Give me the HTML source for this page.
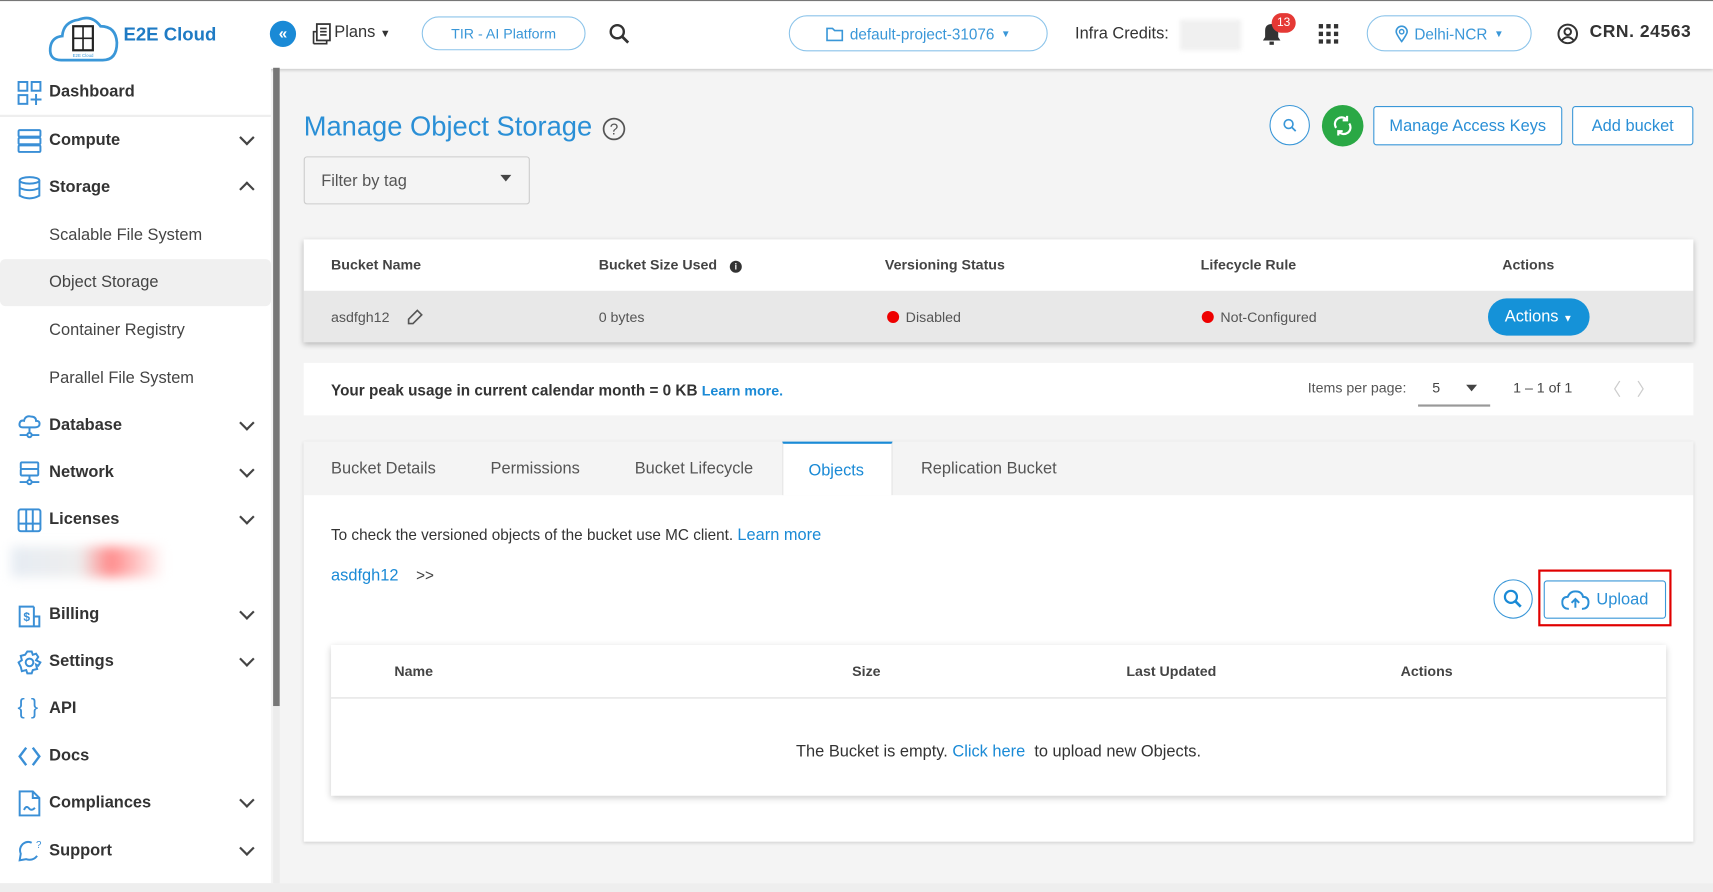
<!DOCTYPE html>
<html><head><meta charset="utf-8"><style>
html,body{margin:0;padding:0;width:1713px;height:892px;overflow:hidden;background:#f4f4f4;}
#w{position:absolute;left:0;top:0;width:1568px;height:816px;transform:scale(1.0925,1.0931);transform-origin:0 0;background:#f4f4f4;font-family:"Liberation Sans",sans-serif;color:#333;}
.a{position:absolute;white-space:nowrap;}
.pill{position:absolute;border:1.5px solid #8cc4ea;border-radius:18px;box-sizing:border-box;color:#3a97d8;font-size:14px;display:flex;align-items:center;justify-content:center;gap:6px;background:#fff}
.side .it{position:absolute;left:45px;font-size:15px;font-weight:bold;color:#333;transform:translateY(-50%)}
.side .sub{position:absolute;left:45px;font-size:15px;color:#444;transform:translateY(-50%)}
.chev{position:absolute;left:221px;width:8px;height:8px;border-right:2px solid #444;border-bottom:2px solid #444;transform:rotate(45deg)}
.ic{position:absolute;left:16px;}
.th{position:absolute;font-size:13px;font-weight:bold;color:#444;transform:translateY(-50%)}
.td{position:absolute;font-size:13px;color:#555;transform:translateY(-50%)}
.dot{display:inline-block;width:11px;height:11px;border-radius:50%;background:#e00;vertical-align:-1px;margin-right:6px}
.btn{position:absolute;border:1.5px solid #3a97d8;border-radius:3px;background:#fff;color:#2a8fd6;font-size:15px;display:flex;align-items:center;justify-content:center;box-sizing:border-box}
</style></head><body><div id="w">
<!-- top bar -->
<div class="a" style="left:0;top:0;width:1568px;height:62px;background:#fff;border-top:1px solid #777;box-shadow:0 1px 3px rgba(0,0,0,.2)"></div>
<svg class="a" style="left:44px;top:11px" width="66" height="46" viewBox="0 0 66 46"><path d="M12 44 Q1 44 2 33 Q3 23 13 22 Q14 9 28 7 Q40 2 48 13 Q62 13 63 28 Q63 44 50 44 Z" fill="#fff" stroke="#3a97d8" stroke-width="2.5"/><rect x="23" y="13" width="18" height="22" fill="none" stroke="#222" stroke-width="2"/><path d="M32 13V35M23 24H41" stroke="#222" stroke-width="1.5"/><text x="32" y="41" font-size="4" text-anchor="middle" fill="#3a97d8">E2E Cloud</text></svg>
<div class="a" style="left:113px;top:22px;font-size:17px;font-weight:bold;color:#1f7bc4">E2E Cloud</div>
<div class="a" style="left:247px;top:19px;width:24px;height:24px;border-radius:50%;background:#1a8ad6;color:#fff;font-size:14px;text-align:center;line-height:23px;font-weight:bold">«</div>
<svg class="a" style="left:286px;top:21px" width="18" height="20" viewBox="0 0 18 20"><rect x="4" y="1" width="12" height="15" fill="none" stroke="#333" stroke-width="1.6"/><path d="M1 19H13V16M1 19V8H4M7 5H13M7 8H13M7 11H13" stroke="#333" stroke-width="1.5" fill="none"/></svg>
<div class="a" style="left:306px;top:21px;font-size:15px;color:#333">Plans <span style="font-size:10px">▼</span></div>
<div class="pill" style="left:386px;top:15px;width:150px;height:31px;font-size:13px">TIR - AI Platform</div>
<svg class="a" style="left:557px;top:21px" width="20" height="20" viewBox="0 0 20 20"><circle cx="8" cy="8" r="6" fill="none" stroke="#333" stroke-width="2.2"/><path d="M12.5 12.5L18 18" stroke="#333" stroke-width="2.5"/></svg>
<div class="pill" style="left:722px;top:14px;width:237px;height:33px;">
<svg width="16" height="14" viewBox="0 0 16 14"><path d="M1 2H6L8 4H15V13H1Z" fill="none" stroke="#3a97d8" stroke-width="1.5"/></svg>default-project-31076 <span style="font-size:9px">▼</span></div>
<div class="a" style="left:984px;top:22px;font-size:15px;color:#333">Infra Credits:</div>
<div class="a" style="left:1080px;top:18px;width:56px;height:28px;background:#f0f0f0;filter:blur(2px)"></div>
<svg class="a" style="left:1153px;top:19px" width="22" height="24" viewBox="0 0 22 24"><path d="M3 18H19L17 15V9Q17 3 11 3Q5 3 5 9V15Z" fill="#333"/><rect x="9" y="19" width="4" height="3" fill="#333"/></svg>
<div class="a" style="left:1164px;top:12px;width:22px;height:18px;border-radius:9px;background:#e53935;color:#fff;font-size:11px;text-align:center;line-height:18px">13</div>
<svg class="a" style="left:1207px;top:22px" width="18" height="18" viewBox="0 0 18 18" fill="#333"><rect x="0" y="0" width="4" height="4"/><rect x="7" y="0" width="4" height="4"/><rect x="14" y="0" width="4" height="4"/><rect x="0" y="7" width="4" height="4"/><rect x="7" y="7" width="4" height="4"/><rect x="14" y="7" width="4" height="4"/><rect x="0" y="14" width="4" height="4"/><rect x="7" y="14" width="4" height="4"/><rect x="14" y="14" width="4" height="4"/></svg>
<div class="pill" style="left:1251px;top:14px;width:151px;height:33px;">
<svg width="12" height="16" viewBox="0 0 12 16"><path d="M6 15Q1 8 1 6A5 5 0 0 1 11 6Q11 8 6 15Z" fill="none" stroke="#3a97d8" stroke-width="1.5"/><circle cx="6" cy="6" r="2" fill="none" stroke="#3a97d8" stroke-width="1.3"/></svg>Delhi-NCR <span style="font-size:9px">▼</span></div>
<svg class="a" style="left:1425px;top:21px" width="20" height="20" viewBox="0 0 20 20"><circle cx="10" cy="10" r="8.5" fill="none" stroke="#333" stroke-width="1.8"/><circle cx="10" cy="8" r="3" fill="none" stroke="#333" stroke-width="1.8"/><path d="M4.5 16Q10 10 15.5 16" fill="none" stroke="#333" stroke-width="1.8"/></svg>
<div class="a" style="left:1455px;top:21px;font-size:16px;font-weight:bold;color:#333;letter-spacing:.5px">CRN. 24563</div>

<!-- sidebar -->
<div class="side">
<div class="a" style="left:0;top:62px;width:248px;height:746px;background:#fff"></div>
<div class="a" style="left:0;top:105px;width:248px;height:2px;background:#eee"></div>
<div class="a" style="left:0;top:237px;width:248px;height:43px;background:#f0f0f0;border-radius:5px"></div>
<div class="a" style="left:250px;top:62px;width:6px;height:584px;background:#777"></div>
<div class="a" style="left:250px;top:646px;width:6px;height:162px;background:#ececec"></div>
<div class="a" style="left:0;top:808px;width:1568px;height:8px;background:#eee"></div>
<svg class="ic" style="top:74px" width="22" height="22" viewBox="0 0 22 22" fill="none" stroke="#3a8fd6" stroke-width="1.8"><rect x="1" y="1" width="8" height="8"/><rect x="13" y="1" width="8" height="8"/><rect x="1" y="13" width="8" height="8"/><path d="M17 12V22M12 17H22"/></svg>
<div class="it" style="top:84px">Dashboard</div>
<svg class="ic" style="top:118px" width="22" height="22" viewBox="0 0 22 22" fill="none" stroke="#3a8fd6" stroke-width="1.8"><rect x="1" y="1" width="20" height="6" rx="1"/><rect x="1" y="8" width="20" height="6" rx="1"/><rect x="1" y="15" width="20" height="6" rx="1"/></svg>
<div class="it" style="top:128px">Compute</div><div class="chev" style="top:121px"></div>
<svg class="ic" style="top:161px" width="22" height="22" viewBox="0 0 22 22" fill="none" stroke="#3a8fd6" stroke-width="1.8"><ellipse cx="11" cy="4" rx="9" ry="3"/><path d="M2 4V18Q11 23 20 18V4M2 11Q11 15 20 11"/></svg>
<div class="it" style="top:171px">Storage</div><div class="chev" style="top:168px;transform:rotate(225deg)"></div>
<div class="sub" style="top:215px">Scalable File System</div>
<div class="sub" style="top:258px">Object Storage</div>
<div class="sub" style="top:302px">Container Registry</div>
<div class="sub" style="top:346px">Parallel File System</div>
<svg class="ic" style="top:379px" width="22" height="22" viewBox="0 0 22 22" fill="none" stroke="#3a8fd6" stroke-width="1.8"><path d="M5 12Q1 12 2 8Q3 5 6 6Q7 1 12 2Q17 2 17 6Q21 6 20 10Q19 12 16 12Z"/><path d="M11 12V17M2 19H9M13 19H20"/><circle cx="11" cy="19" r="2"/></svg>
<div class="it" style="top:389px">Database</div><div class="chev" style="top:382px"></div>
<svg class="ic" style="top:422px" width="22" height="22" viewBox="0 0 22 22" fill="none" stroke="#3a8fd6" stroke-width="1.8"><rect x="3" y="1" width="16" height="6" rx="1"/><rect x="3" y="7" width="16" height="6" rx="1"/><path d="M11 13V17M2 19H9M13 19H20"/><circle cx="11" cy="19" r="2"/></svg>
<div class="it" style="top:432px">Network</div><div class="chev" style="top:425px"></div>
<svg class="ic" style="top:465px" width="22" height="22" viewBox="0 0 22 22" fill="none" stroke="#3a8fd6" stroke-width="1.8"><rect x="1" y="1" width="20" height="20" rx="2"/><path d="M8 1V21M14 1V21M1 14H21"/></svg>
<div class="it" style="top:475px">Licenses</div><div class="chev" style="top:468px"></div>
<div class="a" style="left:10px;top:500px;width:140px;height:28px;background:linear-gradient(90deg,#e6ecf3,#eee 45%,#ff8a8a 65%,#fff);filter:blur(5px)"></div>
<svg class="ic" style="top:552px" width="22" height="22" viewBox="0 0 22 22" fill="none" stroke="#3a8fd6" stroke-width="1.8"><path d="M15 3H2V21H15V3M15 12H20V21H15"/><text x="8.5" y="16" font-size="11" font-weight="bold" fill="#3a8fd6" stroke="none" text-anchor="middle">$</text></svg>
<div class="it" style="top:562px">Billing</div><div class="chev" style="top:555px"></div>
<svg class="ic" style="top:595px" width="22" height="22" viewBox="0 0 22 22" fill="none" stroke="#3a8fd6" stroke-width="1.8"><path d="M9 1H13L14 4L17 3L19 6L17 9L21 11L19 14L17 13L18 17L14 18L13 21H9L8 18L4 19L3 15L1 11L4 9L3 5L7 4Z"/><circle cx="11" cy="11" r="3.5"/></svg>
<div class="it" style="top:605px">Settings</div><div class="chev" style="top:598px"></div>
<div class="a" style="left:16px;top:636px;font-size:20px;color:#3a8fd6">{ }</div>
<div class="it" style="top:648px">API</div>
<svg class="ic" style="top:681px" width="22" height="22" viewBox="0 0 22 22" fill="none" stroke="#3a8fd6" stroke-width="2.2"><path d="M8 3L2 11L8 19M14 3L20 11L14 19"/></svg>
<div class="it" style="top:691px">Docs</div>
<svg class="ic" style="top:723px" width="22" height="24" viewBox="0 0 22 24" fill="none" stroke="#3a8fd6" stroke-width="1.8"><path d="M2 1H14L20 7V23H2Z M14 1V7H20"/><path d="M6 18Q8 13 11 17Q13 19 16 16"/></svg>
<div class="it" style="top:734px">Compliances</div><div class="chev" style="top:727px"></div>
<svg class="ic" style="top:767px" width="22" height="22" viewBox="0 0 22 22" fill="none" stroke="#3a8fd6" stroke-width="1.8"><path d="M13 4Q9 2 5 5Q1 9 3 14L2 20L8 19Q14 21 18 16"/><text x="17" y="9" font-size="9" fill="#3a8fd6" stroke="none">?</text></svg>
<div class="it" style="top:778px">Support</div><div class="chev" style="top:771px"></div>
</div>

<!-- header area -->
<div class="a" style="left:278px;top:102px;font-size:25px;color:#2a8fd6">Manage Object Storage</div>
<svg class="a" style="left:551px;top:107px" width="22" height="22" viewBox="0 0 22 22"><circle cx="11" cy="11" r="9.5" fill="none" stroke="#555" stroke-width="1.6"/><text x="11" y="16" font-size="14" text-anchor="middle" fill="#555">?</text></svg>
<div class="a" style="left:278px;top:143px;width:207px;height:44px;border:1px solid #ccc;box-sizing:border-box;border-radius:3px"></div>
<div class="a" style="left:294px;top:157px;font-size:15px;color:#555">Filter by tag</div>
<div class="a" style="left:458px;top:160px;width:0;height:0;border-left:5px solid transparent;border-right:5px solid transparent;border-top:6px solid #444"></div>
<div class="a" style="left:1162px;top:96px;width:37px;height:37px;border:1.5px solid #3a97d8;border-radius:50%;background:#fff;box-sizing:border-box"></div>
<svg class="a" style="left:1174px;top:108px" width="13" height="13" viewBox="0 0 13 13"><circle cx="5.5" cy="5.5" r="4" fill="none" stroke="#3a97d8" stroke-width="1.5"/><path d="M8.5 8.5L12 12" stroke="#3a97d8" stroke-width="1.6"/></svg>
<div class="a" style="left:1210px;top:96px;width:38px;height:38px;border-radius:50%;background:#2aa845"></div>
<svg class="a" style="left:1218px;top:104px" width="22" height="22" viewBox="0 0 22 22" fill="none" stroke="#fff" stroke-width="2"><path d="M5 13A6 6 0 0 1 15 6L13 4M17 9A6 6 0 0 1 7 16L9 18"/><path d="M15 2V6H11M7 20V16H11"/></svg>
<div class="btn" style="left:1257px;top:97px;width:173px;height:36px">Manage Access Keys</div>
<div class="btn" style="left:1439px;top:97px;width:111px;height:36px">Add bucket</div>

<!-- bucket table -->
<div class="a" style="left:278px;top:219px;width:1272px;height:94px;background:#fff;box-shadow:0 2px 5px rgba(0,0,0,.25)"></div>
<div class="a" style="left:278px;top:266px;width:1272px;height:47px;background:#e8e8e8"></div>
<div class="th" style="left:303px;top:242px">Bucket Name</div>
<div class="th" style="left:548px;top:242px">Bucket Size Used <span style="display:inline-block;width:11px;height:11px;border-radius:50%;background:#333;color:#fff;font-size:8px;text-align:center;line-height:11px;margin-left:8px;vertical-align:0">i</span></div>
<div class="th" style="left:810px;top:242px">Versioning Status</div>
<div class="th" style="left:1099px;top:242px">Lifecycle Rule</div>
<div class="th" style="left:1375px;top:242px">Actions</div>
<div class="td" style="left:303px;top:290px">asdfgh12</div>
<svg class="a" style="left:372px;top:282px" width="16" height="16" viewBox="0 0 16 16"><path d="M10 2L14 6L6 14H2V10Z" fill="none" stroke="#555" stroke-width="1.5"/></svg>
<div class="td" style="left:548px;top:290px">0 bytes</div>
<div class="td" style="left:812px;top:290px"><span class="dot"></span>Disabled</div>
<div class="td" style="left:1100px;top:290px"><span class="dot"></span>Not-Configured</div>
<div class="a" style="left:1362px;top:273px;width:93px;height:34px;border-radius:17px;background:#1592d8;color:#fff;font-size:15px;text-align:center;line-height:34px">Actions <span style="font-size:9px">▼</span></div>

<!-- peak usage -->
<div class="a" style="left:278px;top:332px;width:1272px;height:48px;background:#fff"></div>
<div class="a" style="left:303px;top:349px;font-size:14px;font-weight:bold;color:#333">Your peak usage in current calendar month = 0 KB <span style="color:#1a8ad6;font-size:13px">Learn more.</span></div>
<div class="a" style="left:1197px;top:347px;font-size:13px;color:#555">Items per page:</div>
<div class="a" style="left:1311px;top:347px;font-size:13px;color:#444">5</div>
<div class="a" style="left:1342px;top:352px;width:0;height:0;border-left:5px solid transparent;border-right:5px solid transparent;border-top:6px solid #444"></div>
<div class="a" style="left:1298px;top:370px;width:66px;height:2px;background:#999"></div>
<div class="a" style="left:1385px;top:347px;font-size:13px;color:#444">1 – 1 of 1</div>
<div class="a" style="left:1468px;top:343px;font-size:16px;color:#ccc">〈</div>
<div class="a" style="left:1498px;top:343px;font-size:16px;color:#ccc">〉</div>

<!-- tabs card -->
<div class="a" style="left:278px;top:404px;width:1272px;height:366px;background:#fff;box-shadow:0 1px 3px rgba(0,0,0,.15)"></div>
<div class="a" style="left:278px;top:404px;width:1272px;height:49px;background:#f4f4f4"></div>
<div class="a" style="left:716px;top:404px;width:101px;height:49px;background:#fff;border-top:2px solid #1a8ad6;box-sizing:border-box;border-left:1px solid #e4e4e4;border-right:1px solid #e4e4e4"></div>
<div class="a" style="left:303px;top:420px;font-size:15px;color:#555">Bucket Details</div>
<div class="a" style="left:449px;top:420px;font-size:15px;color:#555">Permissions</div>
<div class="a" style="left:581px;top:420px;font-size:15px;color:#555">Bucket Lifecycle</div>
<div class="a" style="left:740px;top:422px;font-size:15px;color:#1a8ad6">Objects</div>
<div class="a" style="left:843px;top:420px;font-size:15px;color:#555">Replication Bucket</div>
<div class="a" style="left:303px;top:481px;font-size:14px;color:#333">To check the versioned objects of the bucket use MC client. <span style="color:#1a8ad6;font-size:15px">Learn more</span></div>
<div class="a" style="left:303px;top:518px;font-size:15px;color:#1a8ad6">asdfgh12 <span style="color:#444;margin-left:12px;font-size:14px">&gt;&gt;</span></div>
<div class="a" style="left:1367px;top:530px;width:36px;height:36px;border:1.5px solid #3a97d8;border-radius:50%;box-sizing:border-box"></div>
<svg class="a" style="left:1375px;top:538px" width="20" height="20" viewBox="0 0 20 20"><circle cx="8" cy="8" r="5.5" fill="none" stroke="#1a8ad6" stroke-width="2"/><path d="M12 12L17 17" stroke="#1a8ad6" stroke-width="2.5"/></svg>
<div class="a" style="left:1408px;top:521px;width:122px;height:52px;border:2.5px solid #e00000;box-sizing:border-box"></div>
<div class="btn" style="left:1413px;top:531px;width:112px;height:35px;gap:6px"><svg width="26" height="18" viewBox="0 0 26 18"><path d="M7 17Q1 17 1 11Q1 6 6 6Q8 1 13 1Q19 1 20 6Q25 6 25 11Q25 17 19 17" fill="none" stroke="#2a8fd6" stroke-width="1.8"/><path d="M13 16V8M9.5 11.5L13 8L16.5 11.5" fill="none" stroke="#2a8fd6" stroke-width="1.8"/></svg>Upload</div>

<!-- inner table -->
<div class="a" style="left:303px;top:590px;width:1222px;height:138px;background:#fff;box-shadow:0 2px 6px rgba(0,0,0,.2)"></div>
<div class="a" style="left:303px;top:638px;width:1222px;height:1px;background:#ddd"></div>
<div class="th" style="left:361px;top:614px">Name</div>
<div class="th" style="left:780px;top:614px">Size</div>
<div class="th" style="left:1031px;top:614px">Last Updated</div>
<div class="th" style="left:1282px;top:614px">Actions</div>
<div class="a" style="left:303px;top:679px;width:1222px;text-align:center;font-size:15px;color:#333">The Bucket is empty. <span style="color:#1a8ad6">Click here</span> &nbsp;to upload new Objects.</div>
</div></body></html>
